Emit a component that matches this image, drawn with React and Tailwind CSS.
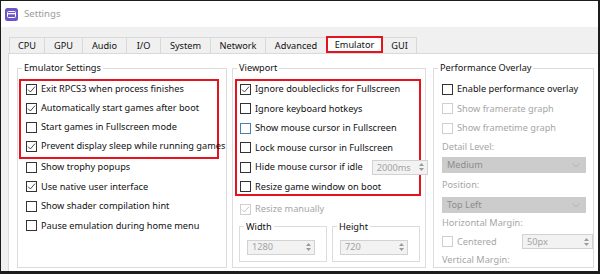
import React from "react";

const Cb = ({ checked, disabled, blue }) => (
  <span
    className={
      "w-[11px] h-[11px] border bg-white flex items-center justify-center shrink-0 " +
      (disabled ? "border-[#cfcfcf]" : blue ? "border-[#4a7fae]" : "border-[#333333]")
    }
  >
    {checked && (
      <svg width="9" height="9" viewBox="0 0 9 9">
        <path d="M1 4.6 L3.4 7 L8 1.6" stroke={disabled ? "#c4c4c4" : "#4a4a4a"} strokeWidth="1" fill="none" />
      </svg>
    )}
  </span>
);

const Row = ({ label, checked, disabled, blue, h = "h-[19px]", children }) => (
  <div className={h + " pb-[3px] flex items-center gap-[4px] whitespace-nowrap"}>
    <Cb checked={checked} disabled={disabled} blue={blue} />
    <span className={disabled ? "text-[#a6a6a6]" : "text-[#111111]"}>{label}</span>
    {children}
  </div>
);

const Arrows = () => (
  <span className="w-[11px] h-full flex flex-col items-center justify-center gap-[2px]">
    <svg width="5" height="3" viewBox="0 0 5 3">
      <path d="M0 3 L2.5 0 L5 3 Z" fill="#9a9a9a" />
    </svg>
    <svg width="5" height="3" viewBox="0 0 5 3">
      <path d="M0 0 L2.5 3 L5 0 Z" fill="#9a9a9a" />
    </svg>
  </span>
);

const Spin = ({ value, w }) => (
  <div className={w + " h-[15px] border border-[#d2d2d2] bg-[#f2f2f2] flex items-center shrink-0"}>
    <span className="flex-1 pl-[4px] text-[#a3a3a3] leading-none">{value}</span>
    <Arrows />
  </div>
);

const Combo = ({ value }) => (
  <div className="w-[144px] h-[16px] bg-[#cccccc] flex items-center justify-between pl-[5px] pr-[6px]">
    <span className="text-[#8c8c8c] leading-none">{value}</span>
    <svg width="8" height="5" viewBox="0 0 8 5">
      <path d="M0.5 0.5 L4 4 L7.5 0.5" stroke="#b0b0b0" strokeWidth="1" fill="none" />
    </svg>
  </div>
);

const Group = ({ title, w, children }) => (
  <fieldset className={w + " h-[207px] border border-[#dcdcdc] shrink-0 min-w-0"}>
    <legend className="ml-[4px] px-[2px] leading-[14px] text-[#111111]">{title}</legend>
    {children}
  </fieldset>
);

const tabs = [
  ["CPU", "w-[35px]"],
  ["GPU", "w-[38px]"],
  ["Audio", "w-[44px]"],
  ["I/O", "w-[34px]"],
  ["System", "w-[50px]"],
  ["Network", "w-[55px]"],
  ["Advanced", "w-[61px]"],
];

export default function App() {
  return (
    <div className="w-[600px] h-[274px] border-t border-l border-r-2 border-b-[3px] border-[#1c1c1c] bg-[#f0f0f0] overflow-hidden flex flex-col font-['Segoe_UI','Noto_Sans',sans-serif] text-[9.2px] text-[#111111]">
      {/* title bar */}
      <div className="h-[26px] bg-white flex items-center pl-[4px] gap-[6px] shrink-0">
        <svg width="13" height="13" viewBox="0 0 13 13">
          <rect x="0" y="0" width="13" height="13" rx="2.5" fill="#6e54c8" />
          <rect x="2.5" y="3.5" width="8" height="6" rx="1" stroke="#ffffff" strokeWidth="1" fill="none" />
          <rect x="3" y="5" width="7" height="1.3" fill="#ffffff" />
        </svg>
        <span className="text-[#9c9c9c] text-[9.6px]">Settings</span>
      </div>

      {/* body */}
      <div className="flex-1 flex flex-col pt-[9px] pl-[7px]">
        <div className="flex items-end h-[17px] ml-[1px]">
          {tabs.map(([t, w]) => (
            <div
              key={t}
              className={w + " h-[16px] border-t border-l border-[#d9d9d9] bg-[#f0f0f0] flex items-center justify-center"}
            >
              {t}
            </div>
          ))}
          <div className="w-[57px] h-[17px] border-2 border-[#e5141c] bg-white flex items-center justify-center">
            Emulator
          </div>
          <div className="w-[34px] h-[16px] border-t border-r border-[#d9d9d9] bg-[#f0f0f0] flex items-center justify-center">
            GUI
          </div>
        </div>

        <div className="flex-1 bg-white border-t border-l border-[#d9d9d9] flex pt-[7px] pl-[8px]">
          {/* Emulator settings */}
          <Group title="Emulator Settings" w="w-[210px]">
            <div className="ml-[1px] mt-[4px] w-[200px] border-2 border-[#e5141c] pl-[5px]">
              <Row label="Exit RPCS3 when process finishes" checked />
              <Row label="Automatically start games after boot" checked />
              <Row label="Start games in Fullscreen mode" />
              <Row label="Prevent display sleep while running games" checked />
            </div>
            <div className="pl-[8px]">
              <Row h="h-[19.5px]" label="Show trophy popups" />
              <Row h="h-[19.5px]" label="Use native user interface" checked />
              <Row h="h-[19.5px]" label="Show shader compilation hint" />
              <Row h="h-[19.5px]" label="Pause emulation during home menu" />
            </div>
          </Group>

          {/* Viewport */}
          <Group title="Viewport" w="w-[194px] ml-[5px]">
            <div className="ml-[2px] mt-[4px] w-[186px] h-[117px] border-2 border-[#e5141c] pl-[3px]">
              <Row h="h-[19.5px]" label="Ignore doubleclicks for Fullscreen" checked />
              <Row h="h-[19.5px]" label="Ignore keyboard hotkeys" />
              <Row h="h-[19.5px]" label="Show mouse cursor in Fullscreen" blue />
              <Row h="h-[19.5px]" label="Lock mouse cursor in Fullscreen" />
              <Row h="h-[19.5px]" label="Hide mouse cursor if idle">
                <div className="flex-1 flex justify-end pr-[1px] min-w-[62px]">
                  <Spin value="2000ms" w="w-[56px]" />
                </div>
              </Row>
              <Row h="h-[19.5px]" label="Resize game window on boot" />
            </div>
            <div className="pl-[7px] mt-[5px]">
              <Row h="h-[19.5px]" label="Resize manually" checked disabled />
            </div>
            <div className="flex gap-[5px] pl-[6px] mt-[-1px]">
              <fieldset className="w-[88px] h-[42px] border border-[#dcdcdc]">
                <legend className="ml-[4px] px-[2px] leading-[14px] text-[#111111]">Width</legend>
                <div className="pl-[7px] mt-[6px]">
                  <Spin value="1280" w="w-[68px]" />
                </div>
              </fieldset>
              <fieldset className="w-[88px] h-[42px] border border-[#dcdcdc]">
                <legend className="ml-[4px] px-[2px] leading-[14px] text-[#111111]">Height</legend>
                <div className="pl-[7px] mt-[6px]">
                  <Spin value="720" w="w-[68px]" />
                </div>
              </fieldset>
            </div>
          </Group>

          {/* Performance overlay */}
          <Group title="Performance Overlay" w="w-[161px] ml-[7px]">
            <div className="pl-[8px] mt-[6px] flex flex-col">
              <Row h="h-[19.5px]" label="Enable performance overlay" />
              <Row h="h-[19.5px]" label="Show framerate graph" disabled />
              <Row h="h-[19.5px]" label="Show frametime graph" disabled />
              <div className="h-[15px] flex items-center text-[#a6a6a6]">Detail Level:</div>
              <div className="mt-[2.5px]">
                <Combo value="Medium" />
              </div>
              <div className="h-[24px] flex items-center text-[#a6a6a6]">Position:</div>
              <Combo value="Top Left" />
              <div className="h-[20px] flex items-center text-[#a6a6a6]">Horizontal Margin:</div>
              <div className="h-[17px] flex items-center gap-[4px]">
                <Cb disabled />
                <span className="text-[#a6a6a6] flex-1">Centered</span>
                <Spin value="50px" w="w-[71px]" />
              </div>
              <div className="h-[20px] flex items-center text-[#a6a6a6]">Vertical Margin:</div>
            </div>
          </Group>
        </div>
      </div>
    </div>
  );
}
